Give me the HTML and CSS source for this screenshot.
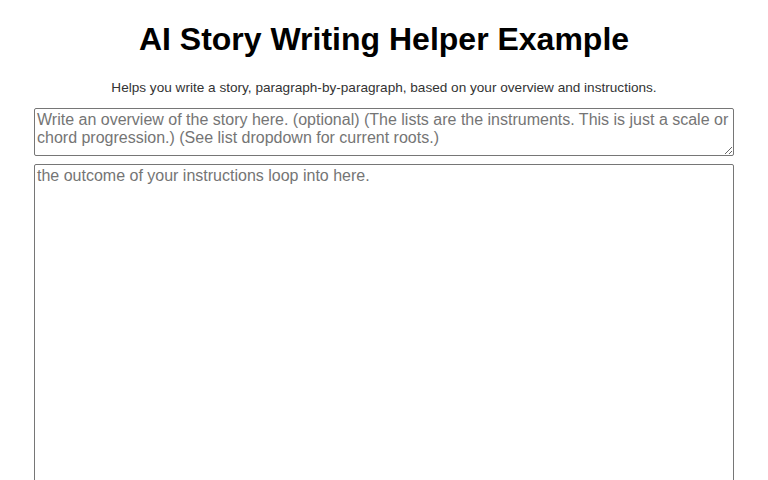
FILE: index.html
```html
<!DOCTYPE html>
<html lang="en">
<head>
    <meta charset="UTF-8">
    <meta name="viewport" content="width=device-width, initial-scale=1.0">
    <title>AI Story Writing Helper Example</title>
    <link rel="stylesheet" href="styles.css">
</head>
<body>

<div class="page">
    <h1>AI Story Writing Helper Example</h1>
    <p class="intro">Helps you write a story, paragraph-by-paragraph, based on your overview and instructions.</p>

    <div class="fields">
        <textarea class="overview" placeholder="Write an overview of the story here. (optional) (The lists are the instruments. This is just a scale or chord progression.) (See list dropdown for current roots.)"></textarea>
        <textarea class="story" placeholder="the outcome of your instructions loop into here."></textarea>
    </div>
</div>

</body>
</html>
```

FILE: styles.css
```css
body {
    font-family: 'Liberation Sans', Arial, sans-serif;
    background-color: #fff;
    color: #000;
    margin: 0;
    padding: 0;
}
.page {
    text-align: center;
}
h1 {
    font-size: 32px;
    font-weight: bold;
    margin: 21px 0 22px;
}
.intro {
    font-size: 13.6px;
    color: #333;
    margin: 13px 0;
}
.fields {
    display: flex;
    flex-direction: column;
    align-items: center;
    gap: 8px;
}
textarea {
    box-sizing: border-box;
    width: 700px;
    font-family: 'Liberation Sans', Arial, sans-serif;
    font-size: 16px;
    padding: 2px;
    border: 1px solid #767676;
    border-radius: 2px;
    display: block;
}
textarea::placeholder {
    color: #757575;
}
.overview {
    height: 48px;
}
.story {
    height: 500px;
}
```
